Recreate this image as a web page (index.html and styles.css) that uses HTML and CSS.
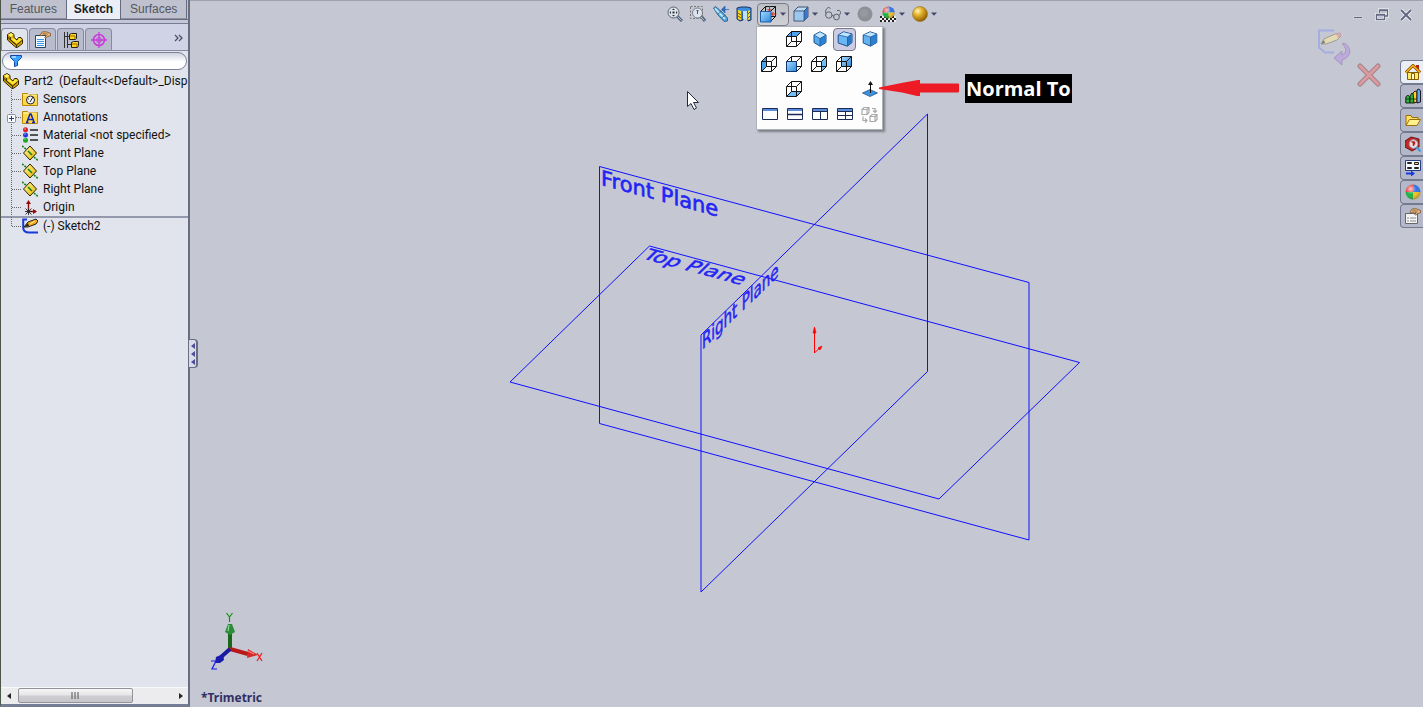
FILE: index.html
```html
<!DOCTYPE html>
<html lang="en">
<head>
<meta charset="utf-8">
<title>Part2 - Sketch</title>
<link rel="stylesheet" href="styles.css">
</head>
<body>
<svg class="sprite" aria-hidden="true">
  <defs>
    <linearGradient id="blue" x1="0" y1="0" x2="1" y2="1"><stop offset="0" stop-color="#a8dcff"/><stop offset="1" stop-color="#2a86dc"/></linearGradient>
    <linearGradient id="gold" x1="0" y1="0" x2="1" y2="1"><stop offset="0" stop-color="#fff79a"/><stop offset="1" stop-color="#e8b400"/></linearGradient>
    <radialGradient id="goldball" cx=".35" cy=".3" r=".75"><stop offset="0" stop-color="#fff6c0"/><stop offset=".35" stop-color="#e8b830"/><stop offset="1" stop-color="#8a5800"/></radialGradient>
    <radialGradient id="shine" cx=".35" cy=".3" r=".75"><stop offset="0" stop-color="#fff" stop-opacity=".75"/><stop offset=".5" stop-color="#fff" stop-opacity="0"/><stop offset="1" stop-color="#000" stop-opacity=".3"/></radialGradient>
  </defs>
  <symbol id="part" viewBox="0 0 16 16">
    <path d="M.5 2.500L4 .5l3 2v3l3 2.500 1.500-2.500 2.500 0 1.500 2v4L11 15l-2 .5L.5 8z" fill="#e9b800" stroke="#2c2200"/>
    <path d="M1 2.800L4 1l2.500 1.800L3.500 5z" fill="#fff36a"/><path d="M3.500 5v3l6 4.500L14 9v2l-4 3.500L1 7.500V3z" fill="#b88a00"/><path d="M4 7.500l2.500-1.500 3.500 3 1.500-2.500h2l1 1L10 11.500z" fill="#ffe638"/><path d="M3.500 5v3l6 5 5.500-4.500M1 5.500l8.500 7.500v2.500" stroke="#2c2200" stroke-width=".8" fill="none"/>
  </symbol>
  <symbol id="hand" viewBox="0 0 16 16">
    <path d="M3 5L6 1h5l5 2v3l-4 1-2 2-1-1 2-3H7L4 6z" fill="#e7b880" stroke="#6a3c14" stroke-width=".8"/><path d="M6 3h4l3 1" stroke="#8a5a28" fill="none" stroke-width=".7"/>
  </symbol>
  <symbol id="props" viewBox="0 0 17 17">
    <path d="M1.500 4.500h10v12h-10z" fill="#f4faff" stroke="#26455e"/><path d="M3 8.500h7M3 10.500h7M3 12.500h7M3 14.500h7" stroke="#3a98e8"/><use href="#hand" x="3" y="0" width="14" height="13"/>
  </symbol>
  <symbol id="config" viewBox="0 0 16 16">
    <path d="M1.500 0v16M4.500 0v16M2 4.500h7M5 12.500h5" stroke="#333" fill="none"/>
    <path d="M6.500 2.500l2-1h5v5l-1 1h-6zM8.500 10.500l2-1h5v4l-1 2h-6z" fill="#ffd21c" stroke="#222"/><path d="M7 4h5v3M9 12h5v3" stroke="#9a7000" fill="none"/>
  </symbol>
  <symbol id="target" viewBox="0 0 16 16">
    <g fill="none" stroke="#c83cdc" stroke-width="1.600"><circle cx="8" cy="8" r="5.500"/><circle cx="8" cy="8" r="2.500" stroke-width="1"/><path d="M8 0v16M0 8h16" stroke-width="1.300"/></g>
  </symbol>
  <symbol id="funnel" viewBox="0 0 12 12"><path d="M.5.500h11v2l-4 4v4l-3 1v-5l-4-4z" fill="#39a4ff" stroke="#1446a8"/><path d="M2 2h4" stroke="#fff"/></symbol>
  <symbol id="folder" viewBox="0 0 16 16"><path d="M.5 2.500h5l1 1h9v11H.5z" fill="#ffd84a" stroke="#b88600"/><path d="M1.500 4h13" stroke="#fff6b8"/></symbol>
  <symbol id="sensor" viewBox="0 0 16 16"><use href="#folder"/><circle cx="8.500" cy="9" r="4" fill="#f3f7ff" stroke="#222"/><path d="M8 11l3-5M6 8h1" stroke="#222"/></symbol>
  <symbol id="annot" viewBox="0 0 16 16"><use href="#folder"/><path d="M4 13.500h2.500M10 13.500h3M5 13l3-8h1l3 8M6.500 10.500h4" fill="none" stroke="#1428b4" stroke-width="1.600"/></symbol>
  <symbol id="material" viewBox="0 0 16 16"><path d="M8 3h8M8 8h8M8 13h8" stroke="#222" stroke-width="1.500"/><circle cx="3.500" cy="2.800" r="2.500" fill="#e02020"/><circle cx="3.500" cy="8" r="2.500" fill="#2038d8"/><circle cx="3.500" cy="13.200" r="2.500" fill="#18a828"/><path d="M2.500 2h1M2.500 7h1M2.500 12h1" stroke="#fff"/></symbol>
  <symbol id="plane" viewBox="0 0 16 16"><path d="M0 1l4 3M12 12l4 3.500" stroke="#128018" stroke-width="1.600" stroke-dasharray="2 1"/><path d="M8 1l6.500 7L8 15 1.500 8z" fill="url(#gold)" stroke="#2a2200"/><path d="M6 6l4 4" stroke="#128018" stroke-width="1.600"/></symbol>
  <symbol id="origin" viewBox="0 0 16 16"><path d="M6.500 12V3M6 12.500h8" stroke="#900c0c" stroke-width="1.400"/><path d="M4 5l2.500-4L9 5zM11 10l4 2.500L11 15z" fill="#900c0c"/><path d="M3.500 9.500l6 6M9.500 9.500l-6 6M6.500 10v6M3 12.500h7" stroke="#222" stroke-width=".9"/></symbol>
  <symbol id="sketch" viewBox="0 0 16 16"><path d="M5 1.500H1.200v8c0 4 2 5 6 5H16" fill="none" stroke="#1838d8" stroke-width="2"/><path d="M2 9l4-5 8-3 2 2-2 3-8 3z" fill="#f8a818" stroke="#222"/><path d="M2 9l4-4 1 3z" fill="#222"/><path d="M8 6l5-3" stroke="#ffee90"/></symbol>
  <symbol id="branch" viewBox="0 0 20 18"><path d="M10.500 0v18M11 9.500h9" stroke="#666" stroke-dasharray="1 1"/></symbol>
  <symbol id="branch-plus" viewBox="0 0 20 18"><use href="#branch"/><rect x="6.500" y="6.500" width="8" height="8" rx="1" fill="#fafbff" stroke="#8890a4"/><path d="M8 10.500h5M10.500 8v5" stroke="#1c3c90"/></symbol>
  <symbol id="branch-end" viewBox="0 0 20 18"><path d="M10.500 0v9M11 9.500h9" stroke="#666" stroke-dasharray="1 1"/></symbol>

  <symbol id="zoomfit" viewBox="0 0 16 16"><path d="M10 10l5 5" stroke="#50647c" stroke-width="3"/><path d="M10 10l4.500 4.500" stroke="#a9c4e4"/><circle cx="6.500" cy="6.500" r="5.500" fill="#dce3ed" stroke="#59626e"/><path d="M6.500 2.500L8 4H5zM6.500 10.500L8 9H5zM2.500 6.500L4 5v3zM10.500 6.500L9 5v3zM5.500 5.500h2v2h-2z" fill="#333"/></symbol>
  <symbol id="zoomarea" viewBox="0 0 16 16"><path d="M11 10l4 5" stroke="#50647c" stroke-width="3"/><path d="M10 10l4.500 4.500" stroke="#a9c4e4"/><circle cx="7.500" cy="7" r="5" fill="#dce3ed" stroke="#777f8c"/><path d="M.5.500h12v12H.5z" fill="none" stroke="#777" stroke-dasharray="2 1.500"/><path d="M7.500 4v4M6.500 5l1-1 1 1" stroke="#555" fill="none"/></symbol>
  <symbol id="prevview" viewBox="0 0 16 16"><path d="M.5 2l2-1.500L9 6l5.500 6v3l-3.500.5L5 9z" fill="#4da6e4" stroke="#285878" stroke-width=".8"/><path d="M2 2.500l10 10.500" stroke="#c8ecff" stroke-width="1.800"/><path d="M5 8l3.500-3M8.500 12l4-3" stroke="#285878" stroke-width=".8"/><path d="M16 3.500h-5M12 0L8.500 3.500 12 7z" stroke="#3568b8" fill="#3568b8" stroke-width=".8"/></symbol>
  <symbol id="section" viewBox="0 0 16 16"><path d="M1 2l4-1h6l4 1v12l-3 1V6H7v8l-3 1-3-2z" fill="#3e8ee0" stroke="#1c355c"/><path d="M2 4l3 1v9l-3-1zM12 5l2-1v9l-2 1z" fill="#ffd928"/><path d="M2 7l3 2M2 10l3 2M12 8l2-2M12 12l2-2" stroke="#6a5800"/><path d="M7 5h4v8H7z" fill="#bfe2fc"/></symbol>
  <symbol id="wire" viewBox="0 0 17 17"><path d="M.5 5.500h10v10H.5zM5.500.500h10v10h-10zM.5 5.500l5-5M10.500 5.500l5-5M10.500 15.500l5-5M.5 15.500l5-5" fill="none" stroke="#151515"/></symbol>
  <symbol id="v-orient" viewBox="0 0 17 17"><use href="#wire"/><path d="M.5 5.500h10.500v10.500H.5z" fill="url(#blue)" stroke="#1b5ca4"/><path d="M9.500 0v5M7.500 3l2 2 2-2M16.500 8h-5M13.500 6l-2 2 2 2" stroke="#d01818" fill="none"/></symbol>
  <symbol id="v-top" viewBox="0 0 17 17"><path d="M.5 5.500l5-5h10l-5 5z" fill="#4ba3ee"/><use href="#wire"/></symbol>
  <symbol id="v-bottom" viewBox="0 0 17 17"><path d="M.5 15.500l5-5h10l-5 5z" fill="#6fbcf6"/><use href="#wire"/></symbol>
  <symbol id="v-left" viewBox="0 0 17 17"><path d="M.5 5.500l5-5v10l-5 5z" fill="#4ba3ee"/><use href="#wire"/></symbol>
  <symbol id="v-right" viewBox="0 0 17 17"><path d="M10.500 5.500l5-5v10l-5 5z" fill="#6fbcf6"/><use href="#wire"/></symbol>
  <symbol id="v-back" viewBox="0 0 17 17"><path d="M5.500.500h10v10h-10z" fill="url(#blue)"/><use href="#wire"/></symbol>
  <symbol id="v-front" viewBox="0 0 17 17"><use href="#wire"/><path d="M.5 5.500h10v10H.5z" fill="url(#blue)" stroke="#10386c"/></symbol>
  <symbol id="c-iso" viewBox="0 0 16 16"><path d="M8 .8l6 3.200v7.500L8 15.200 2 11.500V4z" fill="#55a9ec" stroke="#1d5290"/><path d="M2.500 4.300L8 1.300l5.500 3L8 7.500z" fill="#c0e6ff"/><path d="M8 7.500l5.500-3.200v7L8 14.600z" fill="#2c80d0"/><path d="M2.500 4.300L8 7.500l5.500-3.200M8 7.500v7" fill="none" stroke="#1d5290" stroke-width=".7"/></symbol>
  <symbol id="c-tri" viewBox="0 0 16 16"><path d="M6.500.8L15 3v8.500l-4.500 3.700L1.200 12V4z" fill="#68b6f2" stroke="#1d5290"/><path d="M1.700 4l5-2.700L14.500 3.200 10.500 6z" fill="#c0e6ff"/><path d="M10.500 6l4-2.800v8l-4 3.500z" fill="#2878c8"/><path d="M1.700 4l8.800 2 4-2.800M10.500 6v9" fill="none" stroke="#1d5290" stroke-width=".7"/></symbol>
  <symbol id="c-dim" viewBox="0 0 16 16"><path d="M1.200 4L8 .8 14.800 3v8.500L8.500 15.200 1.200 12z" fill="#63b2f0" stroke="#1d5290"/><path d="M1.700 4L8 1.300l6.500 2L8.500 6z" fill="#c0e6ff"/><path d="M8.500 6l6-2.700v8l-6 3.500z" fill="#2c80d0"/><path d="M1.700 4l6.800 2 6-2.700M8.500 6v9" fill="none" stroke="#1d5290" stroke-width=".7"/></symbol>
  <symbol id="normal" viewBox="0 0 16 16"><path d="M.5 12L8 8.500l7.500 3.500L8 15.500z" fill="#3c92dc" stroke="#174a80" stroke-width=".7"/><path d="M8.500 12V2" stroke="#111"/><path d="M6 4l2.500-4L11 4z" fill="#111"/></symbol>
  <symbol id="win" viewBox="0 0 16 16"><path d="M.5 2.500h15v11H.5z" fill="#fdfdff" stroke="#1b2b55"/><path d="M1 3h14v2H1z" fill="#5c8cdc"/></symbol>
  <symbol id="win2" viewBox="0 0 16 16"><use href="#win"/><path d="M1 8.500h14" stroke="#1b2b55" stroke-width="1.500"/></symbol>
  <symbol id="win3" viewBox="0 0 16 16"><use href="#win"/><path d="M8.500 5v8M1 5.500h14" stroke="#1b2b55"/></symbol>
  <symbol id="win4" viewBox="0 0 16 16"><use href="#win"/><path d="M8.500 5v8M1 5.500h14M1 9.500h14" stroke="#1b2b55"/></symbol>
  <symbol id="link" viewBox="0 0 17 17"><g fill="none" stroke="#a9a9a9" stroke-width="1.200"><path d="M1 3.500h5v5H1zM1 3.500l2-2h5v5l-2 2M6 3.500l2-2M9 10.500h5v5H9zM9 10.500l2-2h5v5l-2 2M14 10.500l2-2M11 2.500h3v4M12 4.500l2 2 2-2M2 10.500v4h4M4 12.500l2 2-2 2"/></g></symbol>
  <symbol id="shaded" viewBox="0 0 16 16"><path d="M1 5l4-4h10v10l-4 4H1z" fill="#b8dcf8" stroke="#41516c"/><path d="M11 5l4-4v10l-4 4z" fill="#3a78d0"/><path d="M1 5h10v10M11 5l4-4" stroke="#41516c" fill="none"/><path d="M2 6h8v8H2z" fill="#9bc8f0"/></symbol>
  <symbol id="glasses" viewBox="0 0 16 16"><g fill="none" stroke="#59616b"><circle cx="3.800" cy="9" r="3.200"/><circle cx="11.500" cy="11" r="2.900"/><path d="M7 9.500l2 .5M.8 7.500C0 4 2 1.500 4 1.500l1.500 1M14 9.500c2-2 2-4 .5-5H12"/></g></symbol>
  <symbol id="greyball" viewBox="0 0 16 16"><circle cx="8" cy="8" r="7.500" fill="#8d9096"/><circle cx="7" cy="7" r="4" fill="#96999f"/></symbol>
  <symbol id="rgb" viewBox="0 0 16 16"><path d="M8 8L.5 8A7.500 7.500 0 0 1 8 .5z" fill="#e83030"/><path d="M8 8V.5A7.500 7.500 0 0 1 15.500 8z" fill="#3070e8"/><path d="M8 8h7.500A7.500 7.500 0 0 1 8 15.500z" fill="#f0c020"/><path d="M8 8v7.500A7.500 7.500 0 0 1 .5 8z" fill="#20b040"/><circle cx="8" cy="8" r="7.500" fill="url(#shine)"/></symbol>
  <symbol id="rgb-scene" viewBox="0 0 16 16"><path d="M0 10h16v6H0z" fill="#eee"/><path d="M0 11h16M0 15h16" stroke="#222" stroke-width="2" stroke-dasharray="2 2"/><path d="M2 13h14" stroke="#222" stroke-width="2" stroke-dasharray="2 2"/><use href="#rgb" x="2" y="0" width="13" height="13"/></symbol>
  <symbol id="ball" viewBox="0 0 16 16"><circle cx="8" cy="8" r="7.500" fill="url(#goldball)" stroke="#93701c" stroke-width=".6"/></symbol>
  <symbol id="caret" viewBox="0 0 6 4"><path d="M0 .5h6L3 3.800z" fill="#45496a"/></symbol>

  <symbol id="home" viewBox="0 0 16 16"><path d="M11 1h3v6h-3z" fill="#b02818"/><path d="M2.500 8.500h11v7h-11z" fill="#ffe96a" stroke="#8a5c00"/><path d="M.8 8.500L8 1.500l7.200 7" fill="none" stroke="#8a5000" stroke-width="3"/><path d="M.8 8.500L8 1.500l7.200 7" fill="none" stroke="#ffb818" stroke-width="1.300"/><path d="M6.500 15V9.500h3V15" fill="#fffbd0" stroke="#8a5c00"/></symbol>
  <symbol id="library" viewBox="0 0 16 16"><g stroke="#1c1c1c"><path d="M.8 9l2-2 2 2v6h-4z" fill="#28b838"/><path d="M5 8l2-3 2 2v8H5z" fill="#28b838"/><path d="M8 5l2-2 2 1v10l-3 1z" fill="#ffd020"/><path d="M12 2l2-1 1.500 2v11l-3.500 1z" fill="#6aa4f4"/><path d="M1 11h11" stroke-width=".8"/></g></symbol>
  <symbol id="open" viewBox="0 0 16 16"><path d="M1 13.500v-10h5l1 2h6v3" fill="#ffe060" stroke="#98700c"/><path d="M1 13.500L4.500 7.500h11L12 13.500z" fill="#fff08c" stroke="#98700c"/></symbol>
  <symbol id="search" viewBox="0 0 16 16"><path d="M0 5l6-4 8 2v8l-7 4-7-4z" fill="#c02828" stroke="#701414"/><circle cx="8.500" cy="8" r="4.300" fill="#f3dede" stroke="#8c9db4"/><path d="M6.500 6h2v4M9.500 5.500v3" stroke="#b02020" fill="none" stroke-width="1.500"/><path d="M11.500 11l4 4.500" stroke="#4a9cdc" stroke-width="2.400"/></symbol>
  <symbol id="palette" viewBox="0 0 16 16"><path d="M.5.500h15v10H.5z" fill="#f6f8ff" stroke="#223c84"/><path d="M2.500 3.500h4v-1h-4zM9.500 2.500h4v2h-4zM2.500 7.500h4v1h-4zM9.500 7.500h4v1h-4z" fill="#ffd860" stroke="#222"/><path d="M1 13.500h6" stroke="#1838e0" stroke-width="2"/><path d="M6 10.500l4 3-4 3z" fill="#1838e0"/></symbol>
  <symbol id="custom" viewBox="0 0 16 16"><path d="M.5 5.500h12v10H.5z" fill="#f4f4f4" stroke="#666"/><path d="M2 10h2M5 10h6M2 13h2M5 13h6" stroke="#888"/><use href="#hand" x="2" y="0" width="14" height="13"/></symbol>
</svg>

<div class="app">
  <aside class="panel">
    <nav class="ribbon" aria-label="Command tabs">
      <button class="tab">Features</button><button class="tab tab-on">Sketch</button><button class="tab">Surfaces</button>
    </nav>
    <div class="managers">
      <button class="mtab mtab-on" aria-label="Feature tree"><svg class="ico"><use href="#part"/></svg></button>
      <button class="mtab" aria-label="Properties"><svg class="ico ico-l"><use href="#props"/></svg></button>
      <button class="mtab" aria-label="Configurations"><svg class="ico"><use href="#config"/></svg></button>
      <button class="mtab" aria-label="Dimensions"><svg class="ico"><use href="#target"/></svg></button>
      <button class="more" aria-label="More"><svg width="10" height="8"><path d="M1 1l3 3-3 3M5 1l3 3-3 3" fill="none" stroke="#4c5068" stroke-width="1.300"/></svg></button>
    </div>
    <label class="filter"><svg width="12" height="12"><use href="#funnel"/></svg><input type="text" aria-label="Filter"></label>
    <ul class="tree">
      <li class="root"><svg class="ico"><use href="#part"/></svg><span>Part2&nbsp; (Default&lt;&lt;Default&gt;_Disp</span></li>
      <li><svg class="twig"><use href="#branch"/></svg><svg class="ico"><use href="#sensor"/></svg><span>Sensors</span></li>
      <li><svg class="twig"><use href="#branch-plus"/></svg><svg class="ico"><use href="#annot"/></svg><span>Annotations</span></li>
      <li><svg class="twig"><use href="#branch"/></svg><svg class="ico"><use href="#material"/></svg><span>Material &lt;not specified&gt;</span></li>
      <li><svg class="twig"><use href="#branch"/></svg><svg class="ico"><use href="#plane"/></svg><span>Front Plane</span></li>
      <li><svg class="twig"><use href="#branch"/></svg><svg class="ico"><use href="#plane"/></svg><span>Top Plane</span></li>
      <li><svg class="twig"><use href="#branch"/></svg><svg class="ico"><use href="#plane"/></svg><span>Right Plane</span></li>
      <li><svg class="twig"><use href="#branch"/></svg><svg class="ico"><use href="#origin"/></svg><span>Origin</span></li>
      <li class="rollback"><svg class="twig"><use href="#branch-end"/></svg><svg class="ico"><use href="#sketch"/></svg><span>(-) Sketch2</span></li>
    </ul>
    <div class="scroll">
      <button class="arrow" aria-label="Scroll left"><svg width="4" height="6"><path d="M4 0v6L0 3z" fill="#222"/></svg></button>
      <div class="track"><div class="thumb"><svg width="8" height="7"><path d="M1 0v7M4 0v7M7 0v7" stroke="#555"/></svg></div></div>
      <button class="arrow" aria-label="Scroll right"><svg width="4" height="6"><path d="M0 0v6l4-3z" fill="#222"/></svg></button>
    </div>
  </aside>

  <main class="view">
    <svg class="scene" viewBox="190 0 1233 707">
      <g class="planes">
        <path d="M599.500 166.500L1029 282.500V540L599.500 423.500z"/>
        <path d="M649.500 246L1079.500 362.500 939 499 510 382z"/>
        <path d="M701 335L927.500 114V371.500L701 592z"/>
      </g>
      <g class="names">
        <text transform="matrix(1 .27 0 1 601 185)">Front Plane</text>
        <text transform="matrix(1 .27 -.64 .63 641 258)">Top Plane</text>
        <text transform="matrix(.64 -.62 0 1 702 350)">Right Plane</text>
      </g>
      <g stroke="#f00" fill="#f00"><path d="M814.500 353V328M814.500 353l6-6" fill="none"/><path d="M813 333l1.500-6 1.500 6zM818 348l4-2-2 4z" stroke-width=".7"/></g>
      <path d="M687.500 91.500v15l3.500-3 3 6 2.500-1.500-3-5.500h5z" fill="#fff" stroke="#222b3c"/>
    </svg>

    <div class="bar">
      <button class="tool" aria-label="Zoom to fit"><svg class="ico"><use href="#zoomfit"/></svg></button>
      <button class="tool" aria-label="Zoom to area"><svg class="ico"><use href="#zoomarea"/></svg></button>
      <button class="tool" aria-label="Previous view"><svg class="ico"><use href="#prevview"/></svg></button>
      <button class="tool" aria-label="Section view"><svg class="ico"><use href="#section"/></svg></button>
      <div class="drop">
        <button class="tool tool-on" aria-label="View orientation"><svg class="ico ico-l"><use href="#v-orient"/></svg><svg class="car"><use href="#caret"/></svg></button>
        <div class="menu">
          <i></i><button aria-label="Top"><svg class="ico ico-l"><use href="#v-top"/></svg></button><button aria-label="Isometric"><svg class="ico"><use href="#c-iso"/></svg></button><button class="picked" aria-label="Trimetric"><svg class="ico"><use href="#c-tri"/></svg></button><button aria-label="Dimetric"><svg class="ico"><use href="#c-dim"/></svg></button>
          <button aria-label="Left"><svg class="ico ico-l"><use href="#v-left"/></svg></button><button aria-label="Front"><svg class="ico ico-l"><use href="#v-front"/></svg></button><button aria-label="Right"><svg class="ico ico-l"><use href="#v-right"/></svg></button><button aria-label="Back"><svg class="ico ico-l"><use href="#v-back"/></svg></button><i></i>
          <i></i><button aria-label="Bottom"><svg class="ico ico-l"><use href="#v-bottom"/></svg></button><i></i><i></i><button aria-label="Normal to"><svg class="ico"><use href="#normal"/></svg></button>
          <button aria-label="Single view"><svg class="ico"><use href="#win"/></svg></button><button aria-label="Two views, horizontal"><svg class="ico"><use href="#win2"/></svg></button><button aria-label="Two views, vertical"><svg class="ico"><use href="#win3"/></svg></button><button aria-label="Four views"><svg class="ico"><use href="#win4"/></svg></button><button aria-label="Link views"><svg class="ico ico-l"><use href="#link"/></svg></button>
        </div>
        <div class="callout">
          <svg width="82" height="16"><path d="M1 7.500L26 2.500 40 0h2v3.500h38q1 0 1 1v7q0 1-1 1H42V16h-3L24 12.500 1 9z" fill="#ed1c24"/></svg>
          <strong>Normal To</strong>
        </div>
      </div>
      <button class="tool" aria-label="Display style"><svg class="ico"><use href="#shaded"/></svg><svg class="car"><use href="#caret"/></svg></button>
      <button class="tool" aria-label="Hide or show items"><svg class="ico"><use href="#glasses"/></svg><svg class="car"><use href="#caret"/></svg></button>
      <button class="tool" aria-label="Edit appearance"><svg class="ico"><use href="#greyball"/></svg></button>
      <button class="tool" aria-label="Apply scene"><svg class="ico"><use href="#rgb-scene"/></svg><svg class="car"><use href="#caret"/></svg></button>
      <button class="tool" aria-label="View settings"><svg class="ico"><use href="#ball"/></svg><svg class="car"><use href="#caret"/></svg></button>
    </div>

    <div class="window">
      <button aria-label="Minimize"><svg width="14" height="14"><path d="M2.500 8.500h9v2h-9z" fill="#636880" stroke="#f4f5fa" stroke-width=".6"/></svg></button>
      <button aria-label="Restore"><svg width="14" height="14"><g fill="none" stroke="#f4f5fa" stroke-width="3"><path d="M4.500 5V2h8v6H10M1.500 6.500h8v5h-8z"/></g><g fill="none" stroke="#636880" stroke-width="1.400"><path d="M4.500 5V2h8v6H10M1.500 6.500h8v5h-8zM4 2.500h9M1 7h9"/></g></svg></button>
      <button aria-label="Close"><svg width="14" height="14"><path d="M2 2l10 10M12 2L2 12" stroke="#f4f5fa" stroke-width="3.500"/><path d="M2 2l10 10M12 2L2 12" stroke="#636880" stroke-width="2"/></svg></button>
    </div>

    <div class="corner">
      <button aria-label="Exit sketch"><svg width="34" height="38"><path d="M17 1.500H2v17l6 5h9" fill="none" stroke="#a4ace0" stroke-width="2"/><path d="M4 15l3-5L18 5l5-1 1 3-4 4-11 4z" fill="#e4dcb0" stroke="#9c9c9c"/><path d="M19 5l4-1 1 3-3 2z" fill="#dfa6ac"/><path d="M4 15l3-4 1 3z" fill="#777"/><path d="M27 14c8 4 8 14-2 17v5L17 29l8-7v4c5-2 5-7 0-11z" fill="#bdaada" stroke="#a597bf"/></svg></button>
      <button class="cancel" aria-label="Cancel"><svg width="24" height="24"><path d="M3 3l18 18M21 3L3 21" stroke="#a68288" stroke-width="5" stroke-linecap="round"/><path d="M3 3l18 18M21 3L3 21" stroke="#d99aa0" stroke-width="3" stroke-linecap="round"/></svg></button>
    </div>

    <nav class="tasks" aria-label="Task pane">
      <button class="task-on" aria-label="Resources"><svg class="ico"><use href="#home"/></svg></button>
      <button aria-label="Design library"><svg class="ico"><use href="#library"/></svg></button>
      <button aria-label="File explorer"><svg class="ico"><use href="#open"/></svg></button>
      <button aria-label="Search"><svg class="ico"><use href="#search"/></svg></button>
      <button aria-label="View palette"><svg class="ico"><use href="#palette"/></svg></button>
      <button aria-label="Appearances"><svg class="ico"><use href="#rgb"/></svg></button>
      <button aria-label="Custom properties"><svg class="ico"><use href="#custom"/></svg></button>
    </nav>

    <button class="grip" aria-label="Collapse panel"><svg width="4" height="24"><path d="M4 1v6L0 4zM4 9v6L0 12zM4 17v6L0 20z" fill="#4c4c9c"/></svg></button>

    <div class="status">
      <svg width="56" height="62">
        <path d="M20 39V20" stroke="#176817" stroke-width="4"/><path d="M15 22l3-8h4l3 8-5 3z" fill="#2c8c3c"/><path d="M18 21l1-6" stroke="#a0e8a8"/>
        <path d="M20 39l18 5" stroke="#b81818" stroke-width="4"/><path d="M38 39l10 6-11 3z" fill="#d42828"/><path d="M38 41l6 3" stroke="#ff9a9a"/>
        <path d="M20 39l-9 8" stroke="#1a1a9c" stroke-width="4"/><path d="M6 47l7-3 1 6-4 3-5 0z" fill="#1a1aac"/>
        <g fill="none" stroke-width="1.200"><path d="M16.500 3l3 4 3-4M19.500 7v5" stroke="#189018"/><path d="M47 43l5 8M52 43l-5 8" stroke="#f01818"/><path d="M1 51h5l-4 8h5" stroke="#1818f0"/></g>
      </svg>
      <p>*Trimetric</p>
    </div>
  </main>
</div>
</body>
</html>
```
FILE: styles.css
```css
* { box-sizing: border-box; }
body { margin: 0; font: 12px/18px Roboto, sans-serif; color: #111; }
button { border: 0; padding: 0; background: none; font: inherit; color: inherit; display: flex; align-items: center; justify-content: center; }
svg { display: block; flex: none; }
.sprite { position: absolute; width: 0; height: 0; }
.ico { width: 16px; height: 16px; }
.ico-l { width: 17px; height: 17px; }

.app { display: flex; height: 100vh; overflow: hidden; }

.panel { width: 190px; flex: none; display: flex; flex-direction: column; background: #e1e4ec; border-left: 1px solid #4c5648; border-right: 2px solid #686d82; border-bottom: 3px solid #757d94; overflow: hidden; }
.ribbon { display: flex; height: 20px; background: #c3c6d1; border-bottom: 1px solid #666b7e; font: 12px/16px "Liberation Sans", sans-serif; color: #545660; padding-right: 1px; }
.tab { flex: 1 1 66px; border-right: 1px solid #666b7e; background: #bfc2ce; align-items: flex-start; padding-top: 1px; border-bottom: 1px solid #8c90a0; }
.tab-on { flex-basis: 55px; background: #eceef7; color: #1c1d24; font-weight: bold; border-bottom: 0; }
.managers { display: flex; height: 31px; flex: none; align-items: flex-end; background: #d0d3e6; border-top: 3px solid #c3c6d8; border-bottom: 1px solid #858aa0; box-shadow: inset 0 1px #777c90; }
.mtab { width: 27px; height: 22px; border: 1px solid #858aa0; border-bottom: 0; border-radius: 4px 4px 0 0; background: #b9bccc; margin-right: 1px; }
.mtab-on { background: #e1e4ec; }
.more { margin-left: auto; padding: 0 4px 8px 0; }
.filter { display: flex; align-items: center; gap: 4px; height: 18px; flex: none; margin: 1px 1px 2px 1px; padding: 0 7px; border: 1px solid #7d8297; border-radius: 9px; background: linear-gradient(#cdd0e0, #fff 55%, #fff); }
.filter input { flex: 1; min-width: 0; border: 0; padding: 0; background: none; font: inherit; outline: 0; }
.tree { list-style: none; margin: 0; padding: 0; flex: 1; white-space: nowrap; }
.tree li { display: flex; align-items: center; gap: 5px; height: 18px; }
.tree .root { padding-left: 2px; }
.twig { width: 20px; height: 18px; margin-right: -4px; }
.tree .rollback { border-top: 2px solid #9498ad; }
.scroll { display: flex; height: 17px; background: #ececee; border-top: 1px solid #f8f8f8; }
.arrow { width: 15px; }
.track { flex: 1; }
.thumb { display: flex; align-items: center; justify-content: center; width: 73%; height: 15px; margin-left: 2px; border: 1px solid #92949a; border-radius: 2px; background: linear-gradient(#f6f6f6, #e6e6e8 45%, #cfcfd2 55%, #c6c6ca); }

.view { position: relative; flex: 1; min-width: 0; background: #c5c8d2; border-top: 1px solid #9fa2ae; }
.scene { position: absolute; inset: -1px 0 0; width: 100%; height: 100vh; }
.planes { fill: none; stroke: #1010ff; stroke-width: 1; }
.names { font-family: "DejaVu Sans", sans-serif; font-size: 21px; fill: #2424f4; stroke: #2424f4; stroke-width: .6; }

.bar { position: relative; display: flex; justify-content: center; align-items: center; gap: 7px; height: 26px; padding-right: 9px; }
.tool { gap: 3px; height: 22px; }
.car { width: 6px; height: 4px; }
.drop { position: relative; margin: 0 -3px 0 -2px; }
.tool-on { width: 32px; height: 23px; border: 1px solid #7b7d86; border-radius: 4px; background: linear-gradient(#bdbfc6, #d0d1d6); }
.menu { position: absolute; top: 23px; left: -1px; display: grid; grid-template-columns: repeat(5, 25px); grid-auto-rows: 25px; padding-bottom: 2px; background: #fdfdfd; border: 1px solid #b0b2ba; box-shadow: 2px 2px 2px #7c7e86; }
.menu .picked { margin: 1px; border: 1px solid #77778c; border-radius: 4px; background: #cccce2; }
.callout { position: absolute; top: 71px; left: 121px; display: flex; align-items: center; gap: 5px; }
.callout strong { padding: 0 1px; background: #000; color: #fff; font: bold 20px/29px "Open Sans", sans-serif; white-space: nowrap; }

.window { position: absolute; top: 7px; right: 10px; display: flex; gap: 10px; }
.corner { position: absolute; top: 28px; right: 42px; display: flex; align-items: flex-end; gap: 6px; }
.corner .cancel { margin-bottom: -20px; }
.tasks { position: absolute; top: 59px; right: 0; width: 23px; }
.tasks button { width: 100%; height: 24px; padding-left: 2px; border: 1px solid #747b90; border-right: 0; border-radius: 4px 0 0 4px; background: #b5b8c9; }
.tasks .task-on { background: #eceef6; }
.grip { position: absolute; top: 338px; left: -1px; width: 9px; height: 29px; border: 1px solid #686d82; border-width: 1px 2px 1px 0; border-radius: 0 4px 4px 0; background: #d9dce8; }
.status { position: absolute; left: 11px; bottom: 0; }
.status svg { margin-left: 9px; }
.status p { margin: 17px 0 0; font: bold 12px/18px "Noto Sans", sans-serif; color: #322f66; }
```
